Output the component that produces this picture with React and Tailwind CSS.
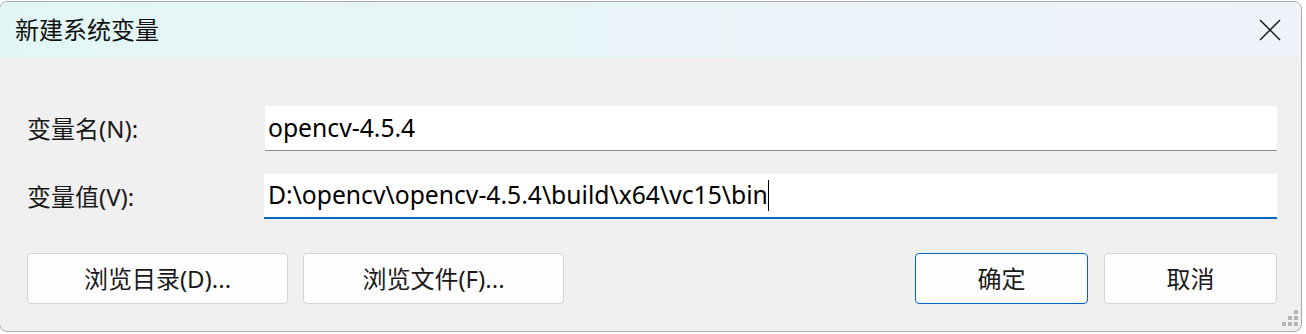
const FONT = { fontFamily: '"Noto Sans", "Noto Sans CJK SC", sans-serif' }

function Field({ label, value, focused }) {
  return (
    <div className="flex items-center h-[45px]">
      <div className="w-[238px] text-[24px] text-[#1a1a1a] leading-none">{label}</div>
      <div
        className={
          focused
            ? 'flex-1 h-full bg-white border-b-2 border-[#0067c0] flex items-center pl-[4px] -ml-px'
            : 'flex-1 h-full bg-white border-b border-[#8a8a8a] flex items-center pl-[3px]'
        }
      >
        <span className="text-[24.7px] text-black leading-none whitespace-pre">{value}</span>
        {focused && <span className="w-px h-[31px] bg-black" />}
      </div>
    </div>
  )
}

function Btn({ children, primary, w }) {
  return (
    <button
      className={
        (primary ? 'border-[#0067c0] ' : 'border-[#d3d3d3] ') +
        'h-[51px] rounded-[4px] border bg-[#fdfdfd] text-[24px] leading-none text-[#1a1a1a] ' +
        w
      }
    >
      {children}
    </button>
  )
}

export default function App() {
  return (
    <div className="w-[1306px] h-[334px] bg-white pt-px" style={FONT}>
      <div className="w-[1303px] h-[331px] rounded-[8px] border border-[#a9a9a9] overflow-hidden flex flex-col bg-[#f0f0f0] -ml-px">
        {/* Title bar */}
        <div className="h-[56px] flex-shrink-0 flex items-center justify-between pl-[15px] pr-[20px] bg-gradient-to-r from-[#e2f7f5] via-[#e8f4f7] to-[#eff2f9]">
          <span className="text-[24px] leading-none text-[#111]">新建系统变量</span>
          <svg width="22" height="22" viewBox="0 0 22 22" className="text-[#1a1a1a]">
            <path d="M1 1 L21 21 M21 1 L1 21" stroke="currentColor" strokeWidth="1.5" fill="none" />
          </svg>
        </div>

        {/* Body */}
        <div className="flex-1 flex flex-col pl-[27px] pr-[24px] pt-[48px]">
          <div className="flex flex-col gap-[23px]">
            <Field label="变量名(N):" value="opencv-4.5.4" />
            <Field label="变量值(V):" value={'D:\\opencv\\opencv-4.5.4\\build\\x64\\vc15\\bin'} focused />
          </div>

          <div className="flex items-center mt-[34px]">
            <Btn w="w-[261px]">浏览目录(D)...</Btn>
            <Btn w="w-[261px] ml-[15px]">浏览文件(F)...</Btn>
            <div className="flex-1" />
            <Btn w="w-[173px]" primary>确定</Btn>
            <Btn w="w-[173px] ml-[16px]">取消</Btn>
          </div>
        </div>

        {/* Resize grip */}
        <div className="relative">
          <div className="absolute right-[3px] bottom-[5px] grid grid-cols-3 gap-[2px]">
            {[0, 0, 1, 0, 1, 1, 1, 1, 1].map((d, i) => (
              <span key={i} className={d ? 'w-[4px] h-[4px] bg-[#b5b5b5]' : 'w-[4px] h-[4px]'} />
            ))}
          </div>
        </div>
      </div>
    </div>
  )
}
